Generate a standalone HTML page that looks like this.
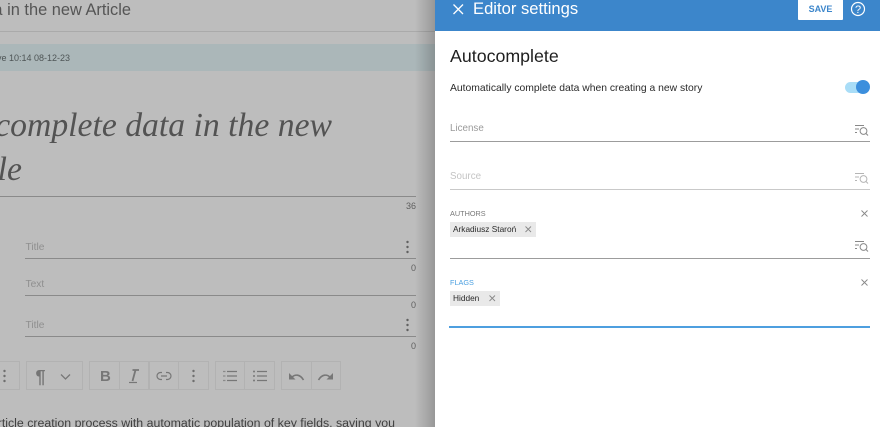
<!DOCTYPE html>
<html><head><meta charset="utf-8"><style>
html,body{margin:0;padding:0;height:427px;overflow:hidden}
body{width:880px;height:427px;overflow:hidden;position:relative;background:#bdbdbd;font-family:"Liberation Sans",sans-serif}
#w{position:absolute;left:0;top:0;width:880px;height:427px;overflow:hidden}
.a{position:absolute;white-space:nowrap}
.r{position:absolute;white-space:nowrap;text-align:right}
.ln{position:absolute;height:1px}
.ph{font-size:10.2px;color:#8f8f8f;left:25.5px}
.cnt{font-size:9px;color:#5f5f5f}
svg{position:absolute;overflow:visible}
.tb{position:absolute;top:361px;height:29px;box-sizing:border-box;border:1px solid #b2b2b2}
</style></head><body><div id="w">
<div class="r" style="right:749px;top:1px;font-size:16.4px;line-height:18px;color:#555">Autocomplete data in the new Article</div>
<div class="ln" style="left:0;top:31px;width:435px;background:#aaa"></div>
<div class="a" style="left:0;top:44px;width:435px;height:27px;background:#abb7b9"></div>
<div class="r" style="right:810px;top:52px;font-size:9px;line-height:12px;color:#4e5556">Last save 10:14 08-12-23</div>
<div class="r" style="right:548px;top:104px;font:italic 33.7px/44px 'Liberation Serif',serif;color:#535353">Autocomplete data in the new</div>
<div class="r" style="right:858px;top:148px;font:italic 33.7px/44px 'Liberation Serif',serif;color:#535353">Article</div>
<div class="ln" style="left:0;top:196px;width:416px;background:#8a8a8a"></div>
<div class="r cnt" style="right:464px;top:201px">36</div>

<div class="a ph" style="top:242px">Title</div>
<div class="ln" style="left:25px;top:258px;width:391px;background:#8a8a8a"></div>
<div class="r cnt" style="right:464px;top:263px">0</div>
<div class="a ph" style="top:279px">Text</div>
<div class="ln" style="left:25px;top:295px;width:391px;background:#8a8a8a"></div>
<div class="r cnt" style="right:464px;top:300px">0</div>
<div class="a ph" style="top:320px">Title</div>
<div class="ln" style="left:25px;top:336px;width:391px;background:#8a8a8a"></div>
<div class="r cnt" style="right:464px;top:341px">0</div>
<svg width="4" height="14" style="left:406px;top:240px"><g fill="#606060"><circle cx="1.5" cy="2" r="1.2"/><circle cx="1.5" cy="7" r="1.2"/><circle cx="1.5" cy="12" r="1.2"/></g></svg>
<svg width="4" height="14" style="left:406px;top:318px"><g fill="#606060"><circle cx="1.5" cy="2" r="1.2"/><circle cx="1.5" cy="7" r="1.2"/><circle cx="1.5" cy="12" r="1.2"/></g></svg>

<div class="tb" style="left:-10px;width:30px"></div>
<div class="tb" style="left:26px;width:57px"></div>
<div class="tb" style="left:89px;width:31px"></div>
<div class="tb" style="left:119px;width:30px"></div>
<div class="tb" style="left:149px;width:30px"></div>
<div class="tb" style="left:178px;width:31px"></div>
<div class="tb" style="left:215px;width:30px"></div>
<div class="tb" style="left:244px;width:31px"></div>
<div class="tb" style="left:281px;width:31px"></div>
<div class="tb" style="left:311px;width:30px"></div>
<svg width="4" height="14" style="left:3px;top:369px"><g fill="#6e6e6e"><circle cx="1.5" cy="2" r="1.2"/><circle cx="1.5" cy="7" r="1.2"/><circle cx="1.5" cy="12" r="1.2"/></g></svg>
<div class="a" style="left:35.5px;top:367px;font-size:18px;line-height:20px;color:#757575;font-weight:bold">¶</div>
<svg width="12" height="8" style="left:60px;top:373px"><path d="M1 1.5L5.5 6L10 1.5" fill="none" stroke="#777" stroke-width="1.3"/></svg>
<div class="a" style="left:100px;top:368px;font-size:15px;line-height:17px;font-weight:bold;color:#777">B</div>
<svg width="10" height="15" style="left:129px;top:369px"><path d="M3.5 1h6.500M6.500 1L3.500 12" fill="none" stroke="#777" stroke-width="1.800"/><path d="M0 13.500h8" stroke="#777" stroke-width="1.200"/></svg>
<svg width="16" height="10" style="left:156px;top:371px"><path d="M6 1.5H4.5a3.5 3.5 0 0 0 0 7H6M10 1.5h1.5a3.5 3.5 0 0 1 0 7H10M5 5h6" fill="none" stroke="#777" stroke-width="1.2"/></svg>
<svg width="4" height="14" style="left:192px;top:369px"><g fill="#6e6e6e"><circle cx="1.5" cy="2" r="1.2"/><circle cx="1.5" cy="7" r="1.2"/><circle cx="1.5" cy="12" r="1.2"/></g></svg>
<svg width="14" height="12" style="left:223px;top:370px"><path d="M4 1.5h10M4 6h10M4 10.5h10" stroke="#777" stroke-width="1.2"/><path d="M0 1.5h2.5M0 6h2.5M0 10.5h2.5" stroke="#8a8a8a" stroke-width="1.2"/></svg>
<svg width="14" height="12" style="left:253px;top:370px"><path d="M4 1.5h10M4 6h10M4 10.5h10" stroke="#777" stroke-width="1.2"/><circle cx="1" cy="1.5" r="1" fill="#777"/><circle cx="1" cy="6" r="1" fill="#777"/><circle cx="1" cy="10.5" r="1" fill="#777"/></svg>
<svg width="16" height="8" style="left:289px;top:373px"><path d="M0 0v6.500h6.500z" fill="#777"/><path d="M2.500 4.500c3.500-3.500 8.500-3.500 12 2.500" fill="none" stroke="#777" stroke-width="1.600"/></svg>
<svg width="16" height="8" style="left:318px;top:373px"><path d="M15 0v6.500H8.500z" fill="#777"/><path d="M12.500 4.500c-3.500-3.500-8.500-3.500-12 2.500" fill="none" stroke="#777" stroke-width="1.600"/></svg>
<div class="r" style="right:485px;top:415px;font-size:12.35px;line-height:16px;color:#404040">Streamline the article creation process with automatic population of key fields, saving you</div>

<div class="a" style="left:415px;top:0;width:20px;height:427px;background:linear-gradient(to right,rgba(0,0,0,0),rgba(0,0,0,.2))"></div>

<div class="a" style="left:435px;top:0;width:445px;height:427px;background:#fff"></div>
<div class="a" style="left:435px;top:0;width:445px;height:31px;background:#3c86cb"></div>
<svg width="10" height="10" style="left:453px;top:4px"><path d="M.5 .5L10 10M10 .5L.5 10" stroke="#fff" stroke-width="1.300"/></svg>
<div class="a" style="left:473px;top:0;font-size:16.6px;line-height:18px;color:#fff">Editor settings</div>
<div class="a" style="left:798px;top:0;width:45px;height:20px;background:#fff;border-radius:0 0 1px 1px;text-align:center;font-size:9px;line-height:18px;font-weight:bold;color:#3c86cb">SAVE</div>
<svg width="16" height="16" style="left:850px;top:1px"><circle cx="8" cy="8" r="6.5" fill="none" stroke="#fff" stroke-width="1.2"/><text x="8" y="12" text-anchor="middle" font-size="11" font-family="Liberation Sans" fill="#fff">?</text></svg>

<div class="a" style="left:450px;top:46px;font-size:17.8px;line-height:20px;color:#1f1f1f">Autocomplete</div>
<div class="a" style="left:450px;top:81.5px;font-size:10.35px;line-height:14px;color:#2a2a2a">Automatically complete data when creating a new story</div>
<div class="a" style="left:845px;top:82px;width:24px;height:11px;border-radius:6px;background:#a9ddf7"></div>
<div class="a" style="left:856px;top:80px;width:14px;height:14px;border-radius:50%;background:#3c8fdd"></div>

<div class="a" style="left:450px;top:122px;font-size:9.8px;line-height:13px;color:#9a9a9a">License</div>
<div class="ln" style="left:450px;top:141px;width:420px;background:#9c9c9c"></div>
<svg width="14" height="11" style="left:855px;top:125px"><path d="M0 .5H9M0 4H4M0 7.5H2" stroke="#888" stroke-width="1"/><circle cx="8.5" cy="6" r="3.4" fill="none" stroke="#888" stroke-width="1"/><path d="M11 8.5l2 2" stroke="#888" stroke-width="1.1"/></svg>

<div class="a" style="left:450px;top:170px;font-size:9.8px;line-height:13px;color:#c4c4c4">Source</div>
<div class="ln" style="left:450px;top:189px;width:420px;background:#c9c9c9"></div>
<svg width="14" height="11" style="left:855px;top:173px"><path d="M0 .5H9M0 4H4M0 7.5H2" stroke="#b5b5b5" stroke-width="1"/><circle cx="8.5" cy="6" r="3.4" fill="none" stroke="#b5b5b5" stroke-width="1"/><path d="M11 8.5l2 2" stroke="#b5b5b5" stroke-width="1.1"/></svg>

<div class="a" style="left:450px;top:208px;font-size:7.3px;line-height:11px;color:#777">AUTHORS</div>
<svg width="7" height="7" style="left:861px;top:210px"><path d="M.5 .5L6.5 6.5M6.5 .5L.5 6.5" stroke="#888" stroke-width=".9"/></svg>
<div class="a" style="left:449.5px;top:221.5px;width:86px;height:15.5px;background:#e9e9e9"></div>
<div class="a" style="left:453px;top:223px;font-size:8.3px;line-height:12px;color:#2a2a2a">Arkadiusz Staroń</div>
<svg width="7" height="7" style="left:525px;top:226px"><path d="M.5 .5L6 6M6 .5L.5 6" stroke="#888" stroke-width=".9"/></svg>
<svg width="14" height="11" style="left:855px;top:241px"><path d="M0 .5H9M0 4H4M0 7.5H2" stroke="#888" stroke-width="1"/><circle cx="8.5" cy="6" r="3.4" fill="none" stroke="#888" stroke-width="1"/><path d="M11 8.5l2 2" stroke="#888" stroke-width="1.1"/></svg>
<div class="ln" style="left:450px;top:258px;width:420px;background:#9c9c9c"></div>

<div class="a" style="left:450px;top:277px;font-size:7.3px;line-height:11px;color:#4a9fe0">FLAGS</div>
<svg width="7" height="7" style="left:861px;top:279px"><path d="M.5 .5L6.5 6.5M6.5 .5L.5 6.5" stroke="#888" stroke-width=".9"/></svg>
<div class="a" style="left:449.5px;top:290.5px;width:50px;height:15.5px;background:#e9e9e9"></div>
<div class="a" style="left:453px;top:292px;font-size:8.3px;line-height:12px;color:#2a2a2a">Hidden</div>
<svg width="7" height="7" style="left:489px;top:295px"><path d="M.5 .5L6 6M6 .5L.5 6" stroke="#888" stroke-width=".9"/></svg>
<div class="a" style="left:449px;top:326px;width:421px;height:2px;background:#4e9fdf"></div>
</div></body></html>
